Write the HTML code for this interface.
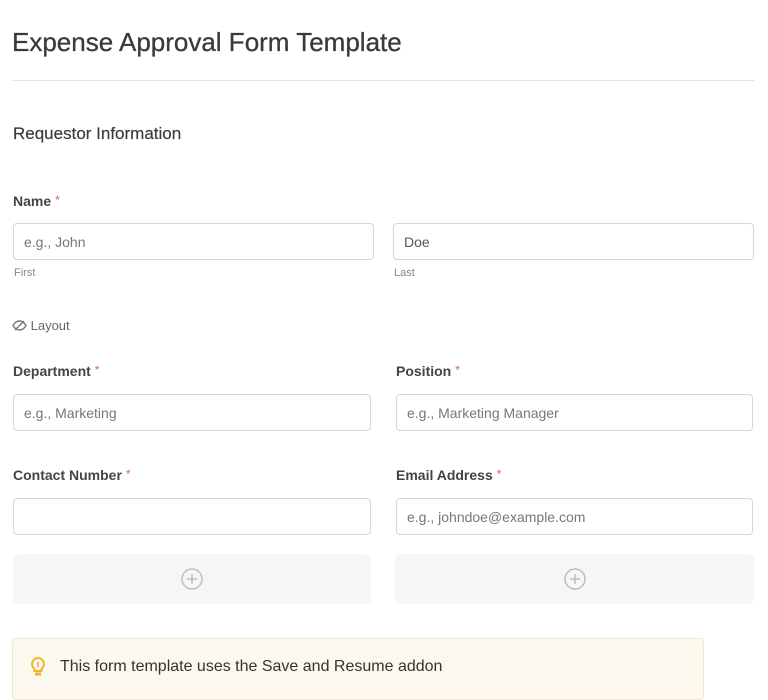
<!DOCTYPE html>
<html><head><style>
body{margin:0;width:768px;height:684px;overflow:hidden;background:#fff;font-family:"Liberation Sans",sans-serif;color:#444;position:relative}
.a{position:absolute}
h1{position:absolute;left:12px;top:27px;margin:0;font-size:26px;font-weight:normal;color:#3a3a3a;-webkit-text-stroke:0.3px #3a3a3a}
.hr{left:12px;top:80px;width:742px;height:1px;background:#e3e3e3}
.lbl{font-size:14px;font-weight:bold;color:#444}
.lbl span{color:#e2624b;font-weight:normal;font-size:12px;margin-left:4px;vertical-align:top}
.in{box-sizing:border-box;border:1px solid #d6d6d6;border-radius:4px;height:37px;font-size:14px;color:#777;padding:10px 10px;background:#fff}
.sub{font-size:11px;color:#888}
.g{background:#f6f6f6;border-radius:5px;height:50px}
.g svg{position:absolute;left:50%;top:50%;margin:-12px 0 0 -12px}
</style></head><body>
<h1>Expense Approval Form Template</h1>
<div class="a hr"></div>
<div class="a" style="left:13px;top:124px;font-size:17px;color:#3c3c3c;-webkit-text-stroke:0.2px #3c3c3c">Requestor Information</div>
<div class="a lbl" style="left:13px;top:193px">Name<span>*</span></div>
<div class="a in" style="left:13px;top:223px;width:361px">e.g., John</div>
<div class="a in" style="left:393px;top:223px;width:361px;color:#555">Doe</div>
<div class="a sub" style="left:14px;top:267px">First</div>
<div class="a sub" style="left:394px;top:267px">Last</div>
<div class="a" style="left:12px;top:318px;font-size:13px;color:#666">
<svg width="15" height="11" viewBox="0 0 15 11" style="vertical-align:-1px"><path d="M1 5.5C3 2 5.5 1 7.5 1S12 2 14 5.5C12 9 9.5 10 7.5 10S3 9 1 5.5Z" fill="none" stroke="#777" stroke-width="1.4"/><path d="M3 10L12 1" stroke="#777" stroke-width="1.4"/></svg> Layout</div>
<div class="a lbl" style="left:13px;top:363px">Department<span>*</span></div>
<div class="a lbl" style="left:396px;top:363px">Position<span>*</span></div>
<div class="a in" style="left:13px;top:394px;width:358px">e.g., Marketing</div>
<div class="a in" style="left:396px;top:394px;width:357px">e.g., Marketing Manager</div>
<div class="a lbl" style="left:13px;top:467px">Contact Number<span>*</span></div>
<div class="a lbl" style="left:396px;top:467px">Email Address<span>*</span></div>
<div class="a in" style="left:13px;top:498px;width:358px"></div>
<div class="a in" style="left:396px;top:498px;width:357px">e.g., johndoe@example.com</div>
<div class="a g" style="left:13px;top:554px;width:358px"><svg width="24" height="24" viewBox="0 0 24 24"><circle cx="12" cy="12" r="10" fill="none" stroke="#bbb" stroke-width="1.4"/><path d="M12 7v10M7 12h10" stroke="#bbb" stroke-width="1.4"/></svg></div>
<div class="a g" style="left:395px;top:554px;width:359px"><svg width="24" height="24" viewBox="0 0 24 24"><circle cx="12" cy="12" r="10" fill="none" stroke="#bbb" stroke-width="1.4"/><path d="M12 7v10M7 12h10" stroke="#bbb" stroke-width="1.4"/></svg></div>
<div class="a" style="left:12px;top:638px;width:690px;height:60px;background:#fdf8ee;border:1px solid #f2e8d4;border-radius:4px"></div>
<svg class="a" style="left:30px;top:656px" width="16" height="22" viewBox="0 0 16 22"><path d="M8 2a6 6 0 0 0-3.5 10.8V15h7v-2.2A6 6 0 0 0 8 2Z" fill="none" stroke="#f0b429" stroke-width="2"/><rect x="5" y="16.5" width="6" height="3" fill="#f0b429"/><path d="M8 6v5" stroke="#f0b429" stroke-width="1.6"/></svg>
<div class="a" style="left:60px;top:658px;font-size:16px;color:#333">This form template uses the Save and Resume addon</div>
</body></html>
